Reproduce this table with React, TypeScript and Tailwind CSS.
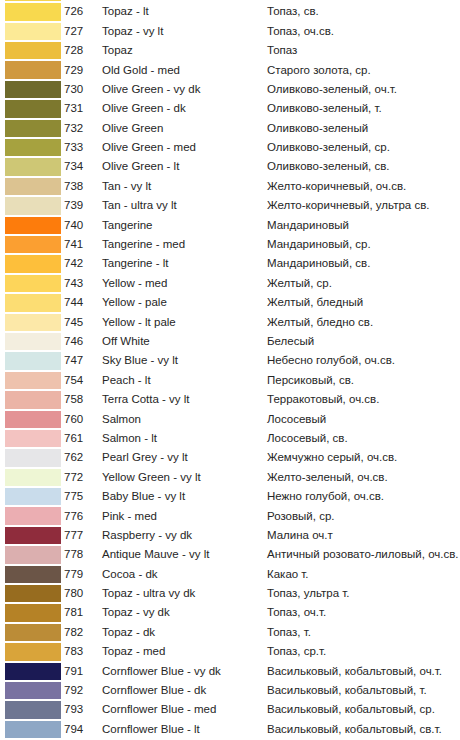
const colors: [string, string, string, string][] = [
  ['726', 'Topaz - lt', 'Топаз, св.', '#f8d94e'],
  ['727', 'Topaz - vy lt', 'Топаз, оч.св.', '#fcea96'],
  ['728', 'Topaz', 'Топаз', '#ecbe3d'],
  ['729', 'Old Gold - med', 'Старого золота, ср.', '#cf9940'],
  ['730', 'Olive Green - vy dk', 'Оливково-зеленый, оч.т.', '#6e6a2c'],
  ['731', 'Olive Green - dk', 'Оливково-зеленый, т.', '#7d782e'],
  ['732', 'Olive Green', 'Оливково-зеленый', '#8e8a34'],
  ['733', 'Olive Green - med', 'Оливково-зеленый, ср.', '#a6a23f'],
  ['734', 'Olive Green - lt', 'Оливково-зеленый, св.', '#cec775'],
  ['738', 'Tan - vy lt', 'Желто-коричневый, оч.св.', '#dcc391'],
  ['739', 'Tan - ultra vy lt', 'Желто-коричневый, ультра св.', '#e8deb9'],
  ['740', 'Tangerine', 'Мандариновый', '#fd7c0c'],
  ['741', 'Tangerine - med', 'Мандариновый, ср.', '#fb9f31'],
  ['742', 'Tangerine - lt', 'Мандариновый, св.', '#fdbf3b'],
  ['743', 'Yellow - med', 'Желтый, ср.', '#fdd55a'],
  ['744', 'Yellow - pale', 'Желтый, бледный', '#fcdd73'],
  ['745', 'Yellow - lt pale', 'Желтый, бледно св.', '#fce8a8'],
  ['746', 'Off White', 'Белесый', '#f3eedf'],
  ['747', 'Sky Blue - vy lt', 'Небесно голубой, оч.св.', '#d4e7e6'],
  ['754', 'Peach - lt', 'Персиковый, св.', '#eec2ad'],
  ['758', 'Terra Cotta - vy lt', 'Терракотовый, оч.св.', '#ebb4a6'],
  ['760', 'Salmon', 'Лососевый', '#e39395'],
  ['761', 'Salmon - lt', 'Лососевый, св.', '#f3c3c1'],
  ['762', 'Pearl Grey - vy lt', 'Жемчужно серый, оч.св.', '#e6e6e8'],
  ['772', 'Yellow Green - vy lt', 'Желто-зеленый, оч.св.', '#eef6d4'],
  ['775', 'Baby Blue - vy lt', 'Нежно голубой, оч.св.', '#c9dceb'],
  ['776', 'Pink - med', 'Розовый, ср.', '#ebaeb2'],
  ['777', 'Raspberry - vy dk', 'Малина оч.т', '#8f2c3c'],
  ['778', 'Antique Mauve - vy lt', 'Античный розовато-лиловый, оч.св.', '#dbafaf'],
  ['779', 'Cocoa - dk', 'Какао т.', '#6b5547'],
  ['780', 'Topaz - ultra vy dk', 'Топаз, ультра т.', '#976c1f'],
  ['781', 'Topaz - vy dk', 'Топаз, оч.т.', '#b58226'],
  ['782', 'Topaz - dk', 'Топаз, т.', '#bb8c37'],
  ['783', 'Topaz - med', 'Топаз, ср.т.', '#d9a43a'],
  ['791', 'Cornflower Blue - vy dk', 'Васильковый, кобальтовый, оч.т.', '#1b1a54'],
  ['792', 'Cornflower Blue - dk', 'Васильковый, кобальтовый, т.', '#7972a1'],
  ['793', 'Cornflower Blue - med', 'Васильковый, кобальтовый, ср.', '#6e7692'],
  ['794', 'Cornflower Blue - lt', 'Васильковый, кобальтовый, св.т.', '#8ea7c5'],
]

export default function App() {
  return (
    <div className="w-[460px] h-[740px] overflow-hidden bg-white text-[#262626] text-[11.5px] font-['Liberation_Sans',Arial,sans-serif]">
      <div className="ml-[5px] w-[56px] h-[1.3px] bg-[#f5d24c]" />
      <div className="mt-[1px]">
        {colors.map(([num, name, ru, hex]) => (
          <div key={num} className="flex items-center h-[19.4px]">
            <div className="ml-[5px] w-[56px] h-[17.4px]" style={{ background: hex }} />
            <span className="ml-[3px] w-[38px]">{num}</span>
            <span className="w-[165px] whitespace-nowrap">{name}</span>
            <span className="whitespace-nowrap">{ru}</span>
          </div>
        ))}
      </div>
    </div>
  )
}
